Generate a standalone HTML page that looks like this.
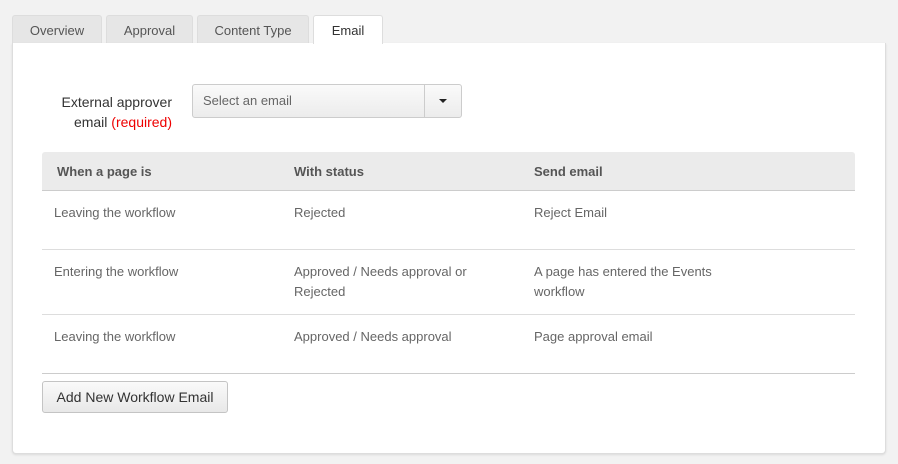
<!DOCTYPE html>
<html><head><style>
body{margin:0;width:898px;height:464px;background:#f2f2f2;font-family:"Liberation Sans",sans-serif;position:relative;overflow:hidden}
.tab{position:absolute;top:15px;height:28px;background:#e6e6e6;border:1px solid #ddd;border-bottom:none;border-radius:3px 3px 0 0;box-sizing:border-box;font-size:13px;color:#555;text-align:center;line-height:29px}
.panel{position:absolute;left:12px;top:43px;width:874px;height:411px;background:#fff;border:1px solid #ddd;border-top:none;box-sizing:border-box;border-radius:0 0 4px 4px;box-shadow:0 1px 2px rgba(0,0,0,.1)}
.a{position:absolute}
.lbl{left:40px;top:92px;width:132px;text-align:right;font-size:14px;color:#333;line-height:20px}
.sel{left:192px;top:84px;width:270px;height:34px;border:1px solid #ccc;border-radius:3px;box-sizing:border-box;background:linear-gradient(#fafafa,#ececec);font-size:13px;color:#666;line-height:32px;padding-left:10px}
.sel .b{position:absolute;right:0;top:0;width:36px;height:32px;border-left:1px solid #ccc}
.sel .b:after{content:"";position:absolute;left:14px;top:14px;border:4px solid transparent;border-top:4px solid #222;border-bottom:none}
.th{left:42px;top:152px;width:813px;height:38px;background:#ebebeb;border-bottom:1px solid #ccc;border-radius:3px 3px 0 0}
.t{position:absolute;font-size:13px;color:#666;line-height:20px}
.h{font-weight:bold;color:#555}
.line{left:42px;width:813px;height:1px;background:#ddd}
.btn{left:42px;top:381px;width:186px;height:32px;border:1px solid #c4c4c4;border-radius:3px;box-sizing:border-box;background:linear-gradient(#fafafa,#e8e8e8);font-size:14px;color:#333;text-align:center;line-height:30px}
</style></head><body>
<div class="tab" style="left:12px;width:90px">Overview</div>
<div class="tab" style="left:106px;width:87px">Approval</div>
<div class="tab" style="left:197px;width:112px">Content Type</div>
<div class="tab" style="left:313px;width:70px;background:#fff;color:#333;height:29px;z-index:2">Email</div>
<div class="panel"></div>
<div class="a lbl">External approver<br>email <span style="color:#e00">(required)</span></div>
<div class="a sel">Select an email<div class="b"></div></div>
<div class="a th"></div>
<div class="t h" style="left:57px;top:162px">When a page is</div>
<div class="t h" style="left:294px;top:162px">With status</div>
<div class="t h" style="left:534px;top:162px">Send email</div>
<div class="t" style="left:54px;top:203px">Leaving the workflow</div>
<div class="t" style="left:294px;top:203px">Rejected</div>
<div class="t" style="left:534px;top:203px">Reject Email</div>
<div class="a line" style="top:249px"></div>
<div class="t" style="left:54px;top:262px">Entering the workflow</div>
<div class="t" style="left:294px;top:262px">Approved / Needs approval or<br>Rejected</div>
<div class="t" style="left:534px;top:262px">A page has entered the Events<br>workflow</div>
<div class="a line" style="top:314px"></div>
<div class="t" style="left:54px;top:327px">Leaving the workflow</div>
<div class="t" style="left:294px;top:327px">Approved / Needs approval</div>
<div class="t" style="left:534px;top:327px">Page approval email</div>
<div class="a line" style="top:373px;background:#ccc"></div>
<div class="a btn">Add New Workflow Email</div>
</body></html>
